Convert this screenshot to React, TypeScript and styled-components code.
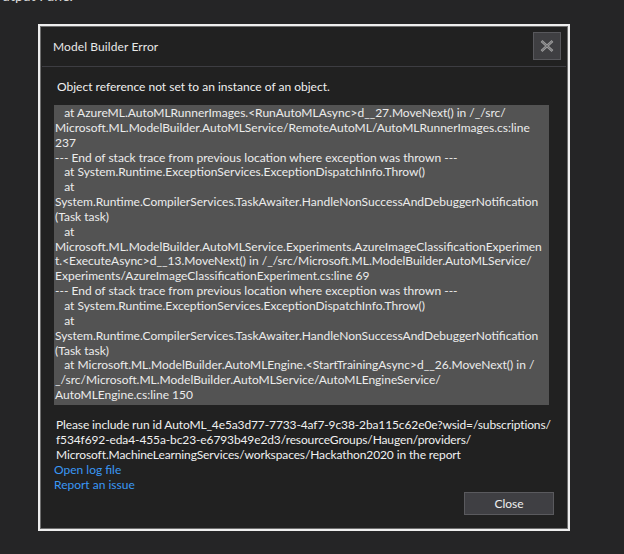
import React from "react";
import styled, { createGlobalStyle } from "styled-components";

const GlobalStyle = createGlobalStyle`
  html, body {
    margin: 0;
    padding: 0;
    background: #252526;
  }
  body {
    font-family: Lato, "Noto Sans", "Liberation Sans", sans-serif;
    overflow: hidden;
  }
`;

const Page = styled.div`
  width: 624px;
  height: 554px;
  overflow: hidden;
  background: #252526;
`;

const TopText = styled.div`
  margin-top: -11px;
  margin-left: -9px;
  height: 14px;
  line-height: 14px;
  font-size: 14px;
  color: #d8d8d8;
  white-space: nowrap;
`;

const Dialog = styled.div`
  margin-top: 21px;
  margin-left: 38px;
  width: 532px;
  height: 507px;
  box-sizing: border-box;
  border: 2px solid #eeeeee;
  box-shadow: inset 0 0 0 1px #6e6e6e;
  background: #212121;
  display: flex;
  flex-direction: column;
`;

const Header = styled.div`
  height: 40px;
  margin: 0 2px;
  border-bottom: 1px solid #3d3d42;
  display: flex;
  align-items: center;
  justify-content: space-between;
  padding: 0 5px 0 11px;
`;

const Title = styled.div`
  font-size: 12px;
  color: #e8e8e8;
  letter-spacing: 0.1px;
`;

const CloseIcon = styled.button`
  width: 28px;
  height: 28px;
  padding: 0;
  box-sizing: border-box;
  background: #3f3f42;
  border: 1px solid #58585c;
  display: flex;
  align-items: center;
  justify-content: center;
`;

const Body = styled.div`
  flex: 1;
  display: flex;
  flex-direction: column;
  padding: 12px 14px 0 14px;
`;

const Message = styled.div`
  font-size: 12px;
  line-height: 15px;
  color: #f0f0f0;
  padding-left: 3px;
`;

const Trace = styled.div`
  margin-top: 11px;
  margin-right: 5px;
  background: #535353;
  color: #ececec;
  font-size: 12px;
  line-height: 14.85px;
  white-space: pre;
  padding: 1px 0 2px 1px;
  height: 300px;
  box-sizing: border-box;
  overflow: hidden;
`;

const Info = styled.div`
  margin-top: 12px;
  font-size: 12px;
  line-height: 15px;
  color: #f0f0f0;
  white-space: pre;
  padding-left: 2px;
  letter-spacing: -0.12px;
`;

const Link = styled.a`
  display: block;
  font-size: 12px;
  line-height: 15px;
  color: #3a98f5;
  text-decoration: none;
  cursor: pointer;
`;

const Footer = styled.div`
  display: flex;
  justify-content: flex-end;
`;

const Button = styled.button`
  width: 90px;
  height: 23px;
  box-sizing: border-box;
  background: #3f3f43;
  border: 1px solid #5a5a5e;
  color: #f0f0f0;
  font-family: Lato, "Noto Sans", "Liberation Sans", sans-serif;
  font-size: 12px;
  padding: 0;
`;

const trace = [
  "   at AzureML.AutoMLRunnerImages.<RunAutoMLAsync>d__27.MoveNext() in /_/src/",
  "Microsoft.ML.ModelBuilder.AutoMLService/RemoteAutoML/AutoMLRunnerImages.cs:line",
  "237",
  "--- End of stack trace from previous location where exception was thrown ---",
  "   at System.Runtime.ExceptionServices.ExceptionDispatchInfo.Throw()",
  "   at",
  "System.Runtime.CompilerServices.TaskAwaiter.HandleNonSuccessAndDebuggerNotification",
  "(Task task)",
  "   at",
  "Microsoft.ML.ModelBuilder.AutoMLService.Experiments.AzureImageClassificationExperimen",
  "t.<ExecuteAsync>d__13.MoveNext() in /_/src/Microsoft.ML.ModelBuilder.AutoMLService/",
  "Experiments/AzureImageClassificationExperiment.cs:line 69",
  "--- End of stack trace from previous location where exception was thrown ---",
  "   at System.Runtime.ExceptionServices.ExceptionDispatchInfo.Throw()",
  "   at",
  "System.Runtime.CompilerServices.TaskAwaiter.HandleNonSuccessAndDebuggerNotification",
  "(Task task)",
  "   at Microsoft.ML.ModelBuilder.AutoMLEngine.<StartTrainingAsync>d__26.MoveNext() in /",
  "_/src/Microsoft.ML.ModelBuilder.AutoMLService/AutoMLEngineService/",
  "AutoMLEngine.cs:line 150",
].join("\n");

const info = [
  "Please include run id AutoML_4e5a3d77-7733-4af7-9c38-2ba115c62e0e?wsid=/subscriptions/",
  "f534f692-eda4-455a-bc23-e6793b49e2d3/resourceGroups/Haugen/providers/",
  "Microsoft.MachineLearningServices/workspaces/Hackathon2020 in the report",
].join("\n");

export default function App() {
  return (
    <Page>
      <GlobalStyle />
      <TopText>Output Pane.</TopText>
      <Dialog>
        <Header>
          <Title>Model Builder Error</Title>
          <CloseIcon aria-label="Close">
            <svg width="14" height="12" viewBox="0 0 14 12">
              <path d="M1.5 1 L12.5 11 M12.5 1 L1.5 11" stroke="#9c9c9c" strokeWidth="2.6" strokeLinecap="butt" />
              <path d="M2 1.5 L12 10.5 M12 1.5 L2 10.5" stroke="#66666a" strokeWidth="0.8" />
            </svg>
          </CloseIcon>
        </Header>
        <Body>
          <Message>Object reference not set to an instance of an object.</Message>
          <Trace>{trace}</Trace>
          <Info>{info}</Info>
          <Link>Open log file</Link>
          <Link>Report an issue</Link>
          <Footer>
            <Button>Close</Button>
          </Footer>
        </Body>
      </Dialog>
    </Page>
  );
}
